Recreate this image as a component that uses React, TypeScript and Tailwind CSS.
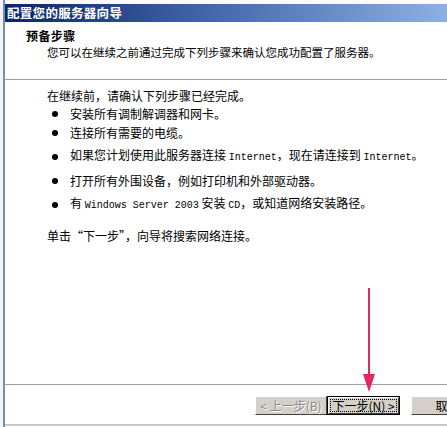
import React from "react";

const cjk = '"Noto Sans CJK SC", "Liberation Sans", sans-serif';

function Mono({ children }: { children: React.ReactNode }) {
  return (
    <span className="text-[10px]" style={{ fontFamily: '"Liberation Mono", monospace' }}>
      {children}
    </span>
  );
}

function Bullet({ children, top }: { children: React.ReactNode; top: string }) {
  return (
    <div className={`flex items-center ${top}`}>
      <span className="ml-[5px] mr-[12px] h-[6px] w-[6px] rounded-full bg-black" />
      <span className="whitespace-nowrap">{children}</span>
    </div>
  );
}

function ClassicButton({
  children,
  focused,
  disabled,
  className = "",
}: {
  children: React.ReactNode;
  focused?: boolean;
  disabled?: boolean;
  className?: string;
}) {
  return (
    <div
      className={`flex h-[19px] w-[72px] shrink-0 items-center justify-center bg-[#d4d0c8] ${
        focused ? "border border-black" : ""
      } ${className}`}
    >
      <div className="flex h-full w-full border-t border-l border-t-white border-l-white border-r border-b border-r-[#404040] border-b-[#404040] p-[1px]">
        <div
          className={`flex flex-1 items-center justify-center whitespace-nowrap text-[12px] leading-none ${
            focused ? "border border-dotted border-black" : ""
          } ${disabled ? "text-[#8a8a8a]" : "text-black"}`}
          style={disabled ? { textShadow: "1px 1px 0 #ffffff" } : undefined}
        >
          {children}
        </div>
      </div>
    </div>
  );
}

export default function App() {
  return (
    <div
      className="relative flex h-[427px] w-[447px] overflow-hidden bg-white text-[11.5px] leading-[16px] text-black"
      style={{ fontFamily: cjk }}
    >
      {/* window frame edge */}
      <div className="flex w-[5px] shrink-0">
        <div className="w-[3px] bg-[#f4f4f4]" />
        <div className="w-[2px] bg-[#7b8ca6]" />
      </div>

      <div className="flex min-w-0 flex-1 flex-col">
        <div className="h-[4px] bg-[#fafafa]" />
        {/* title bar */}
        <div className="flex h-[18px] items-center bg-gradient-to-r from-[#0b2568] via-[#4a6cae] to-[#8eb0e2] pl-[2px]">
          <span className="text-[12.5px] font-bold tracking-[0.3px] text-white">配置您的服务器向导</span>
        </div>

        {/* header */}
        <div className="h-[57px] pl-[21px] pt-[6px]">
          <div className="text-[12px] font-bold tracking-[0.4px]">预备步骤</div>
          <div className="pl-[21px]">您可以在继续之前通过完成下列步骤来确认您成功配置了服务器。</div>
        </div>
        <div className="h-px bg-[#a0a0a0]" />
        <div className="h-px bg-white" />

        {/* body */}
        <div className="flex-1 pl-[42px] pt-[7px] text-[12px]">
          <div>在继续前，请确认下列步骤已经完成。</div>
          <Bullet top="mt-[2px]">安装所有调制解调器和网卡。</Bullet>
          <Bullet top="mt-[3px]">连接所有需要的电缆。</Bullet>
          <Bullet top="mt-[6px]">
            如果您计划使用此服务器连接 <Mono>Internet</Mono>，现在请连接到 <Mono>Internet</Mono>。
          </Bullet>
          <Bullet top="mt-[7px]">打开所有外围设备，例如打印机和外部驱动器。</Bullet>
          <Bullet top="mt-[6px]">
            有 <Mono>Windows Server 2003</Mono> 安装 <Mono>CD</Mono>，或知道网络安装路径。
          </Bullet>
          <div className="mt-[14px]">单击“下一步”，向导将搜索网络连接。</div>
        </div>

        {/* separator */}
        <div className="h-px bg-[#a0a0a0]" />
        <div className="h-px bg-white" />

        {/* buttons */}
        <div className="flex h-[38px] items-center pl-[250px] pt-[1px]">
          <ClassicButton disabled>&lt; 上一步(B)</ClassicButton>
          <ClassicButton focused className="w-[73px]">
            下一步(N) &gt;
          </ClassicButton>
          <ClassicButton className="ml-[11px] w-[73px]">取消</ClassicButton>
        </div>
        <div className="h-[2px] bg-[#c8c8c8]" />
        <div className="h-[1px] bg-white" />
      </div>

      {/* annotation arrow */}
      <svg className="absolute left-[362px] top-[286px]" width="14" height="110" viewBox="0 0 14 110">
        <line x1="7" y1="2" x2="7" y2="92" stroke="#e5255c" strokeWidth="2" />
        <polygon points="1,88 13,88 7,106" fill="#e5255c" />
      </svg>
    </div>
  );
}
